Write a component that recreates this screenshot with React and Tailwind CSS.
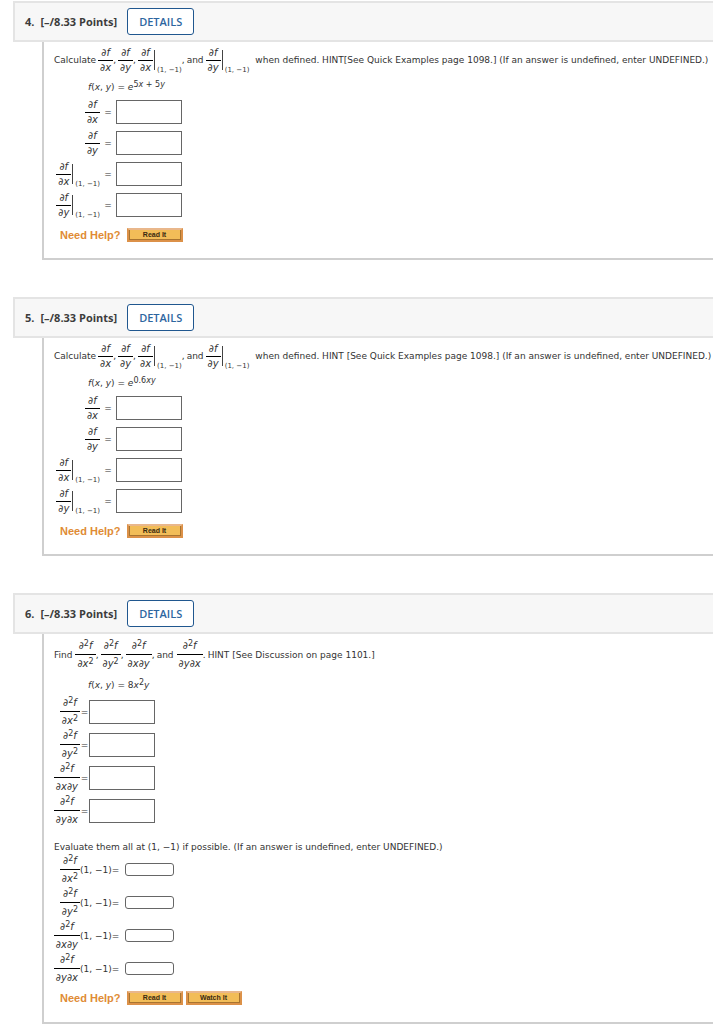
import React from 'react';

/**
 * Question header bar - number, points and the details button
 */
const QuestionHeader = ({ number }) => {
    return (
        <div className="ml-[13px] flex h-[41px] items-center border-2 border-r-0 border-[#e4e4e4] bg-[#f7f7f7] pl-[10px] font-['Open_Sans',sans-serif] text-[11px] text-[#3c3c3c]">
            <h2 className="flex items-center gap-[6px] font-bold">
                <span>{number}.</span>
                <span>[–/8.33 Points]</span>
            </h2>
            <button className="ml-[10px] h-[27px] w-[67px] rounded-[3px] border border-[#20578f] bg-white font-semibold text-[#2d669f]">
                DETAILS
            </button>
        </div>
    );
};

const Sup = ({ children }) => (
    <sup className="top-[-3px] text-[8px] not-italic leading-none">{children}</sup>
);

/**
 * Stacked partial derivative
 */
const Fraction = ({ children }) => (
    <span className="inline-flex shrink-0 flex-col items-center text-[10px] italic leading-[13px]">
        <span>∂f</span>
        <span className="mt-px border-t border-black px-[2px]">{children}</span>
    </span>
);

// Second order derivative, with more room around the line for the exponents
const SecondFraction = ({ children }) => (
    <span className="inline-flex shrink-0 flex-col items-center text-[10px] italic leading-[13px]">
        <span>∂<Sup>2</Sup>f</span>
        <span className="mt-[2px] border-t border-black px-[2px] pt-[2px]">{children}</span>
    </span>
);

// First order derivative with the "evaluated at" bar
const EvaluatedFraction = ({ children }) => (
    <span className="inline-flex shrink-0 items-center">
        <Fraction>{children}</Fraction>
        <span className="ml-px flex h-5 items-end border-l border-[#444] pl-[2px]">
            <span className="-mb-[6px] whitespace-nowrap text-[7px] leading-[12px]">(1, −1)</span>
        </span>
    </span>
);

const secondOrder = [
    { id: 'xx', bottom: <>∂x<Sup>2</Sup></> },
    { id: 'yy', bottom: <>∂y<Sup>2</Sup></> },
    { id: 'xy', bottom: '∂x∂y' },
    { id: 'yx', bottom: '∂y∂x' },
];

const firstOrder = [
    { id: 'x', label: <Fraction>∂x</Fraction> },
    { id: 'y', label: <Fraction>∂y</Fraction> },
    { id: 'x-at', label: <EvaluatedFraction>∂x</EvaluatedFraction> },
    { id: 'y-at', label: <EvaluatedFraction>∂y</EvaluatedFraction> },
];

const NeedHelp = ({ buttons }) => (
    <div className="ml-[6px] flex items-center gap-[3px] font-['Liberation_Sans',Arial,sans-serif]">
        <span className="mr-[3px] text-[11px] font-bold leading-[14px] text-[#e08b35]">Need Help?</span>
        {buttons.map((name) => (
            <button key={name} className="h-[14px] w-14 border-2 border-[#dc9148] border-t-[#e9b78b] bg-[#dc9148]">
                <span className="block h-[10px] border border-t-0 border-[#a87430] bg-[#f2bd58] text-[7px] font-bold leading-[9px] text-[#3a2a10]">
                    {name}
                </span>
            </button>
        ))}
    </div>
);

const Question = ({ number, children }) => (
    <section>
        <QuestionHeader number={number} />
        <div className="ml-[42px] border-b-2 border-l-2 border-[#cfcfcf] pl-[10px]">
            {children}
        </div>
    </section>
);

/**
 * Body of the questions asking for the first order derivatives
 */
const FirstOrderQuestion = ({ number, formula, hint }) => {
    return (
        <Question number={number}>
            <div className="flex h-[35px] items-center">
                <span className="mr-[2px]">Calculate</span>
                <Fraction>∂x</Fraction>
                <span className="mr-[2px]">,</span>
                <Fraction>∂y</Fraction>
                <span className="mr-[2px]">,</span>
                <EvaluatedFraction>∂x</EvaluatedFraction>
                <span className="mr-[2px]">,</span>
                <span className="mr-[2px]">and</span>
                <EvaluatedFraction>∂y</EvaluatedFraction>
                <span className="ml-[6px] whitespace-nowrap">{hint}</span>
            </div>
            <p className="ml-[34px] flex h-[19px] items-center">
                <span>{formula}</span>
            </p>
            {firstOrder.map((row) => (
                <div key={row.id} className="flex h-[31px] items-center">
                    <label htmlFor={`q${number}-${row.id}`} className="flex items-center">
                        <span className="flex w-[46px] justify-end">{row.label}</span>
                        <span className="w-4 text-center">=</span>
                    </label>
                    <input id={`q${number}-${row.id}`} type="text" className="h-6 w-[66px] border border-[#666] bg-white px-1" />
                </div>
            ))}
            <div className="pb-4 pt-2">
                <NeedHelp buttons={['Read It']} />
            </div>
        </Question>
    );
};

const SecondOrderQuestion = ({ number }) => {
    return (
        <Question number={number}>
            <div className="flex h-[41px] items-center">
                <span className="mr-[3px]">Find</span>
                {secondOrder.map((item, index) => (
                    <React.Fragment key={item.id}>
                        {index === 3 && <span className="mr-[3px]">and</span>}
                        <SecondFraction>{item.bottom}</SecondFraction>
                        <span className="mr-[2px]">{index === 3 ? '.' : ','}</span>
                    </React.Fragment>
                ))}
                <span className="whitespace-nowrap">HINT [See Discussion on page 1101.]</span>
            </div>
            <p className="ml-[34px] flex h-5 items-center">
                <span><i>f</i>(<i>x</i>, <i>y</i>) = 8<i>x</i><Sup>2</Sup><i>y</i></span>
            </p>
            {secondOrder.map((item) => (
                <div key={item.id} className="flex h-[33px] items-center">
                    <label htmlFor={`d-${item.id}`} className="flex items-center">
                        <span className="flex w-[26px] justify-end"><SecondFraction>{item.bottom}</SecondFraction></span>
                        <span className="w-[9px] text-center">=</span>
                    </label>
                    <input id={`d-${item.id}`} type="text" className="h-6 w-[66px] border border-[#666] bg-white px-1" />
                </div>
            ))}
            <p className="pt-[14px] leading-[12px]">
                Evaluate them all at (1, −1) if possible. (If an answer is undefined, enter UNDEFINED.)
            </p>
            {secondOrder.map((item) => (
                <div key={item.id} className="flex h-[33px] items-center">
                    <label htmlFor={`v-${item.id}`} className="flex w-[71px] items-center">
                        <span className="flex w-[26px] justify-end"><SecondFraction>{item.bottom}</SecondFraction></span>
                        <span className="whitespace-nowrap">(1, −1)</span>
                        <span>=</span>
                    </label>
                    <input id={`v-${item.id}`} type="text" className="h-[13px] w-[49px] rounded-[3px] border border-[#666] bg-white px-1" />
                </div>
            ))}
            <div className="pb-[17px] pt-[6px]">
                <NeedHelp buttons={['Read It', 'Watch It']} />
            </div>
        </Question>
    );
};

const App = () => {
    return (
        <main className="flex flex-col gap-[37px] bg-white pt-px font-['DejaVu_Sans',Verdana,sans-serif] text-[9px] leading-[12px] text-[#333]">
            <FirstOrderQuestion
                number={4}
                formula={<><i>f</i>(<i>x</i>, <i>y</i>) = <i>e</i><Sup>5<i>x</i> + 5<i>y</i></Sup></>}
                hint="when defined. HINT[See Quick Examples page 1098.] (If an answer is undefined, enter UNDEFINED.)"
            />
            <FirstOrderQuestion
                number={5}
                formula={<><i>f</i>(<i>x</i>, <i>y</i>) = <i>e</i><Sup>0.6<i>xy</i></Sup></>}
                hint="when defined. HINT [See Quick Examples page 1098.] (If an answer is undefined, enter UNDEFINED.)"
            />
            <SecondOrderQuestion number={6} />
        </main>
    );
};

export default App;
